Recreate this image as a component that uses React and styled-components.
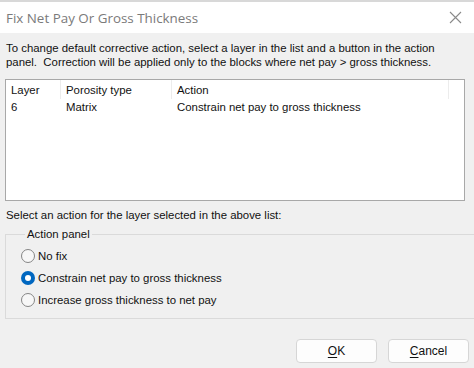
import React from "react";
import styled, { createGlobalStyle } from "styled-components";

const Global = createGlobalStyle`
  html, body { margin: 0; padding: 0; background: #f0f0f0; }
  #root { width: 474px; height: 368px; overflow: hidden; }
`;

const Window = styled.div`
  width: 474px;
  height: 368px;
  background: #f0f0f0;
  font-family: "Liberation Sans", Arial, sans-serif;
  font-size: 11.4px;
  color: #111;
  display: flex;
  flex-direction: column;
  border-top: 2px solid #d8d8d8;
  box-sizing: border-box;
`;

const TitleBar = styled.div`
  height: 31px;
  background: #fff;
  display: flex;
  align-items: center;
  justify-content: space-between;
  padding: 0 12px 0 6px;
  flex: none;
`;

const Title = styled.div`
  font-family: "Open Sans", "Noto Sans", sans-serif;
  font-size: 13.4px;
  color: #7a7a7a;
  margin-top: 1px;
`;

const Body = styled.div`
  padding: 0 5px 0 5px;
  display: flex;
  flex-direction: column;
  flex: 1;
`;

const Intro = styled.p`
  margin: 8px 0 0 1px;
  line-height: 14px;
`;

const List = styled.div`
  margin-top: 10px;
  width: 458px;
  height: 120px;
  background: #fff;
  border: 1px solid #a8a8a8;
`;

const Row = styled.div`
  display: grid;
  grid-template-columns: 55px 111px 277px 1fr;
  height: ${(p) => (p.$header ? "19px" : "16px")};
  align-items: center;
`;

const Cell = styled.div`
  padding-left: 5px;
  height: 100%;
  display: flex;
  align-items: center;
  border-right: ${(p) => (p.$sep ? "1px solid #ececec" : "none")};
`;

const Prompt = styled.div`
  margin: 7px 0 0 1px;
  line-height: 14px;
`;

const Group = styled.fieldset`
  margin: 5px -10px 0 0;
  padding: 7px 0 11px 15px;
  border: 1px solid #dadada;
  border-right: none;
  display: flex;
  flex-direction: column;
  gap: 7px;
`;

const Legend = styled.legend`
  padding: 0 2px;
  margin-left: 4px;
  font-size: 11.4px;
  line-height: 14px;
`;

const Option = styled.label`
  display: flex;
  align-items: center;
  gap: 3px;
  height: 15px;
  line-height: 14px;
`;

const Radio = styled.span`
  width: 14px;
  height: 14px;
  border-radius: 50%;
  box-sizing: border-box;
  flex: none;
  display: flex;
  align-items: center;
  justify-content: center;
  background: ${(p) => (p.$checked ? "#0067c0" : "#f7f7f7")};
  border: ${(p) => (p.$checked ? "none" : "1px solid #858585")};
  &::after {
    content: "";
    display: ${(p) => (p.$checked ? "block" : "none")};
    width: 6px;
    height: 6px;
    border-radius: 50%;
    background: #fff;
  }
`;

const Footer = styled.div`
  display: flex;
  justify-content: flex-end;
  gap: 11px;
  margin-top: 20px;
`;

const Button = styled.button`
  width: 81px;
  height: 24px;
  background: #fdfdfd;
  border: 1px solid #d6d6d6;
  border-radius: 4px;
  font-family: "Liberation Sans", Arial, sans-serif;
  font-size: 12px;
  color: #111;
  padding: 0;
  u { text-decoration: underline; text-underline-offset: 2px; }
`;

const CloseIcon = () => (
  <svg width="13" height="13" viewBox="0 0 13 13">
    <path d="M1 1 L12 12 M12 1 L1 12" stroke="#8a8a8a" strokeWidth="1.1" fill="none" />
  </svg>
);

const options = [
  { label: "No fix", checked: false },
  { label: "Constrain net pay to gross thickness", checked: true },
  { label: "Increase gross thickness to net pay", checked: false },
];

export default function App() {
  return (
    <>
      <Global />
      <Window>
        <TitleBar>
          <Title>Fix Net Pay Or Gross Thickness</Title>
          <CloseIcon />
        </TitleBar>
        <Body>
          <Intro>
            To change default corrective action, select a layer in the list and a button in the action
            <br />
            panel.&nbsp; Correction will be applied only to the blocks where net pay &gt; gross thickness.
          </Intro>
          <List>
            <Row $header>
              <Cell $sep>Layer</Cell>
              <Cell $sep>Porosity type</Cell>
              <Cell $sep>Action</Cell>
              <Cell />
            </Row>
            <Row>
              <Cell>6</Cell>
              <Cell>Matrix</Cell>
              <Cell>Constrain net pay to gross thickness</Cell>
              <Cell />
            </Row>
          </List>
          <Prompt>Select an action for the layer selected in the above list:</Prompt>
          <Group>
            <Legend>Action panel</Legend>
            {options.map((o) => (
              <Option key={o.label}>
                <Radio $checked={o.checked} />
                {o.label}
              </Option>
            ))}
          </Group>
          <Footer>
            <Button><u>O</u>K</Button>
            <Button><u>C</u>ancel</Button>
          </Footer>
        </Body>
      </Window>
    </>
  );
}
